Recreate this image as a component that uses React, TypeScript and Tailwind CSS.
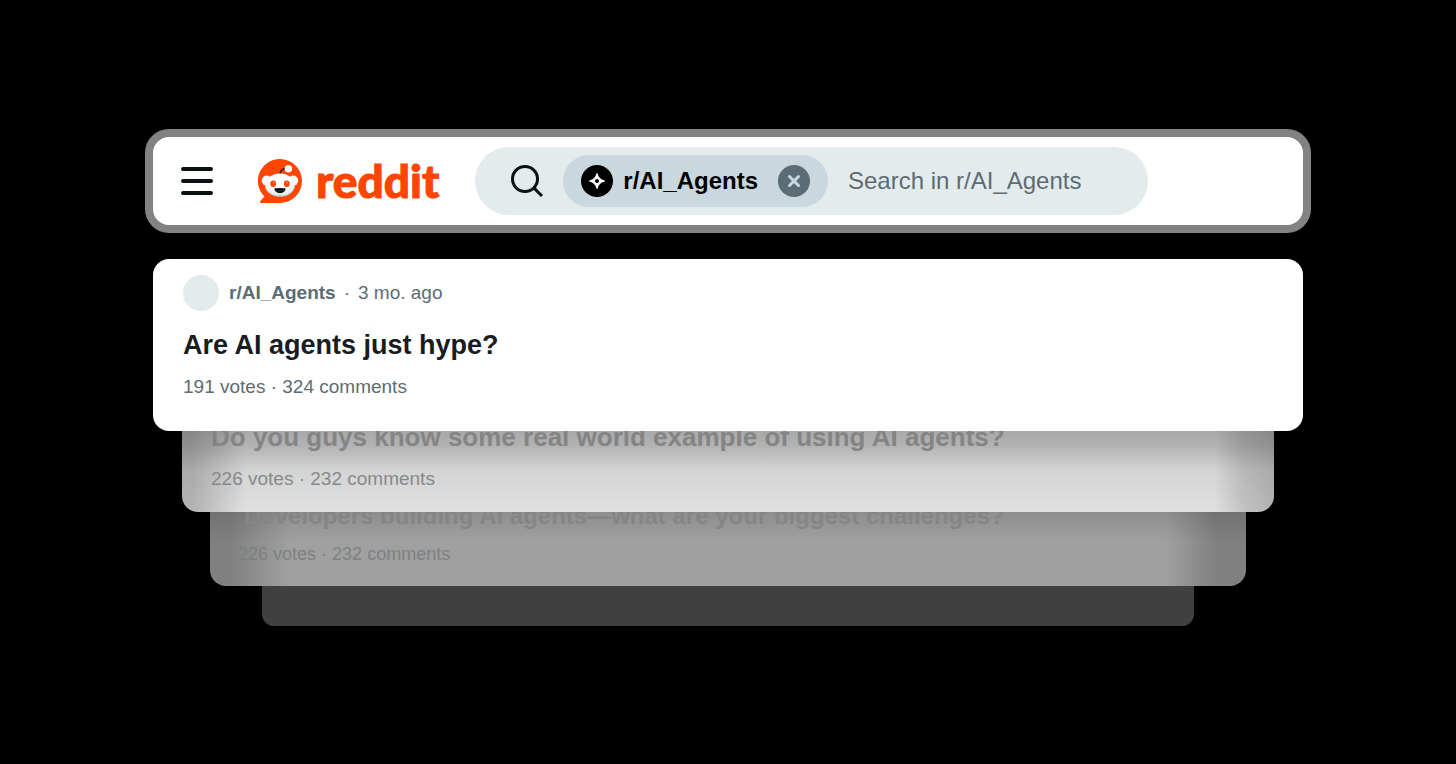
import React from 'react';
import clsx from 'clsx';

interface Post {
  title: string;
  votes: number;
  comments: number;
}

interface StackedPostProps {
  post?: Post;
  className: string;
  titleClassName?: string;
  metaClassName?: string;
}

const featured: Post = { title: 'Are AI agents just hype?', votes: 191, comments: 324 };

const examples: Post = {
  title: 'Do you guys know some real world example of using AI agents?',
  votes: 226,
  comments: 232,
};

const challenges: Post = {
  title: 'Developers building AI agents—what are your biggest challenges?',
  votes: 226,
  comments: 232,
};

const RedditMark: React.FC = () => (
  <svg viewBox="0 0 44 44" className="w-11 h-11 shrink-0" aria-hidden="true">
    <defs>
      <radialGradient id="face" cx="50%" cy="35%" r="65%">
        <stop offset="0.5" stopColor="#ffffff" />
        <stop offset="0.85" stopColor="#e6eef2" />
        <stop offset="1" stopColor="#a9bcc6" />
      </radialGradient>
    </defs>
    <path
      d="M22 0a22 22 0 0 1 0 44H3.2c-1.2 0-1.7-1.3-.9-2.1l4.1-4.3A22 22 0 0 1 22 0Z"
      fill="#ff4500"
    />
    <circle cx="8.8" cy="21.6" r="5" fill="#f7fafb" />
    <circle cx="35.2" cy="21.6" r="5" fill="#f7fafb" />
    <path d="M22 15.6c0-3.600 2.400-6.100 6-6.100" fill="none" stroke="#13181b" strokeWidth="1.500" strokeLinecap="round" />
    <circle cx="30.4" cy="9.8" r="3.700" fill="#f7fafb" />
    <ellipse cx="22" cy="26.2" rx="14.800" ry="11.600" fill="url(#face)" />
    <ellipse cx="15.2" cy="24.8" rx="2.900" ry="3.200" fill="#ff4500" />
    <ellipse cx="28.8" cy="24.8" rx="2.900" ry="3.200" fill="#ff4500" />
    <circle cx="15.8" cy="23.6" r="0.7" fill="#ffc49b" />
    <circle cx="29.4" cy="23.6" r="0.7" fill="#ffc49b" />
    <path
      d="M17.200 29.300q4.800-.5 9.600 0c.7.1 1 .5.8 1.100-1 2.500-3.100 3.800-5.600 3.800s-4.600-1.300-5.600-3.800c-.2-.6.1-1 .8-1.100Z"
      fill="#13181b"
    />
  </svg>
);

const MenuIcon: React.FC = () => (
  <svg viewBox="0 0 32 32" className="w-8 h-8" aria-hidden="true">
    <path d="M2 4h28M2 16h28M2 28h28" stroke="#0b1013" strokeWidth="4" strokeLinecap="round" />
  </svg>
);

const SearchIcon: React.FC = () => (
  <svg viewBox="0 0 32 32" className="w-8 h-8 shrink-0" fill="none" stroke="#0b1013" strokeWidth="3" aria-hidden="true">
    <circle cx="14" cy="14" r="12.5" />
    <path d="M22.600 22.600 31 31" />
  </svg>
);

const CommunityIcon: React.FC = () => (
  <svg viewBox="0 0 32 32" className="w-8 h-8 shrink-0" aria-hidden="true">
    <circle cx="16" cy="16" r="16" fill="#000000" />
    <path
      d="M16 8.500c1.400 4.300 3.200 6.100 7.500 7.500-4.300 1.400-6.100 3.200-7.500 7.500-1.400-4.300-3.200-6.100-7.500-7.500 4.300-1.400 6.100-3.200 7.500-7.500Z"
      fill="#ffffff"
      stroke="#ffffff"
      strokeLinejoin="round"
    />
    <circle cx="16" cy="16" r="2" fill="#000000" />
  </svg>
);

const ClearIcon: React.FC = () => (
  <svg viewBox="0 0 32 32" className="block w-8 h-8" aria-hidden="true">
    <circle cx="16" cy="16" r="16" fill="#5c6c74" />
    <path d="m11.500 11.500 9 9m0-9-9 9" stroke="#c9d7de" strokeWidth="3" strokeLinecap="round" />
  </svg>
);

const Header: React.FC = () => (
  <header className="flex items-center rounded-3xl border-8 border-[#828282] bg-white py-2.5 pl-7 pr-6">
    <button type="button" aria-label="Menu">
      <MenuIcon />
    </button>
    <a href="#" className="ml-[45px] flex items-center gap-3.5">
      <RedditMark />
      <span className="font-['Lato',sans-serif] text-[46px] leading-[44px] font-black text-[#ff4500] [-webkit-text-stroke:1px_#ff4500]">
        reddit
      </span>
    </a>
    <form className="ml-9 flex h-[68px] min-w-0 max-w-[673px] flex-1 items-center rounded-full bg-[#e4ebed] pl-9 pr-8">
      <SearchIcon />
      <div className="ml-5 flex h-[52px] shrink-0 items-center rounded-full bg-[#c9d7de] px-[18px]">
        <CommunityIcon />
        <span className="ml-2.5 text-[24px] leading-8 font-bold text-black">r/AI_Agents</span>
        <button type="button" aria-label="Clear community" className="ml-5">
          <ClearIcon />
        </button>
      </div>
      <input
        type="text"
        aria-label="Search in r/AI_Agents"
        placeholder="Search in r/AI_Agents"
        className="ml-5 min-w-0 flex-1 bg-transparent text-[24px] leading-8 text-[#5c6c74] outline-none placeholder:text-[#5c6c74]"
      />
    </form>
  </header>
);

const PostMeta: React.FC<{ post: Post; className?: string }> = ({ post, className }) => (
  <p className={clsx('leading-6', className)}>
    {post.votes} votes · {post.comments} comments
  </p>
);

const FeaturedPost: React.FC<{ post: Post }> = ({ post }) => (
  <article className="relative z-30 rounded-2xl bg-white px-[30px] pt-4 pb-8 text-[#5c6c74]">
    <div className="flex items-center gap-2.5 text-[19px] leading-6">
      <span className="h-9 w-9 rounded-full bg-[#e4ebed]" />
      <div className="flex gap-2">
        <a href="#" className="font-bold">
          r/AI_Agents
        </a>
        <span>·</span>
        <span>3 mo. ago</span>
      </div>
    </div>
    <h2 className="mt-4 text-[27px] leading-9 font-bold text-[#181c1f]">{post.title}</h2>
    <PostMeta post={post} className="mt-3 text-[19px]" />
  </article>
);

const StackedPost: React.FC<StackedPostProps> = ({ post, className, titleClassName, metaClassName }) => (
  <article className={clsx('relative -mt-5 overflow-hidden', className)}>
    {post && (
      <>
        <h2 className={clsx('leading-9 font-bold whitespace-nowrap', titleClassName)}>{post.title}</h2>
        <PostMeta post={post} className={metaClassName} />
      </>
    )}
  </article>
);

const App: React.FC = () => (
  <div className="min-h-screen bg-black px-6 pt-[129px] pb-32 font-['Liberation_Sans',Arial,sans-serif]">
    <div className="mx-auto max-w-[1166px]">
      <Header />
      <main className="mx-2 mt-[26px]">
        <FeaturedPost post={featured} />
        <StackedPost
          post={examples}
          className="z-20 mx-[29px] rounded-2xl bg-[linear-gradient(to_right,#0003_10px,#0000_64px,#0000_calc(100%-60px),#0002_calc(100%-30px),#0003),linear-gradient(#a8a8a8_20px,#b4b4b4_36px,#d4d4d4_60px,#e0e0e0)] px-[29px] pt-2 pb-[21px]"
          titleClassName="text-[26px] text-[#848484]"
          metaClassName="mt-3 text-[19px] text-[#858a8c]"
        />
        <StackedPost
          post={challenges}
          className="z-10 mx-[57px] rounded-2xl bg-[linear-gradient(to_right,#0003_20px,#0000_80px,#0000_calc(100%-80px),#0003_calc(100%-30px)),linear-gradient(#8e8e8e_20px,#a0a0a0_50px)] px-7 pt-1.5 pb-5"
          titleClassName="pl-1.5 text-[24px] text-[#858585]"
          metaClassName="mt-2 text-[18px] text-[#7d8183]"
        />
        <StackedPost className="mx-[109px] h-[60px] rounded-xl bg-[#404040]" />
      </main>
    </div>
  </div>
);

export default App;
